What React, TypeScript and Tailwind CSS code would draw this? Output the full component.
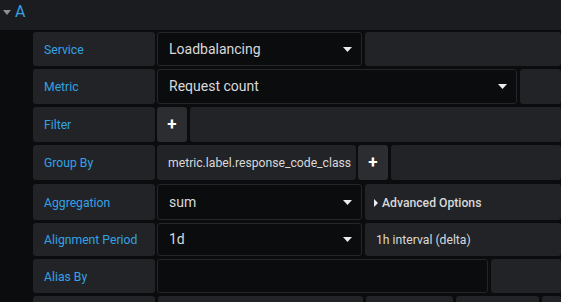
import React from 'react';

const Caret = () => (
    <svg width="9" height="5" viewBox="0 0 9 5" className="shrink-0">
        <path d="M0 0h9L4.5 5z" fill="#e9edf2" />
    </svg>
);

function Label({ children }: { children: React.ReactNode }) {
    return (
        <div className="w-[122px] shrink-0 h-full flex items-center pl-[11px] pt-[2px] bg-[#222326] rounded-[3px] text-[12.2px] text-[#33a2e5]">
            {children}
        </div>
    );
}

function Select({ value, width }: { value: string; width: string }) {
    return (
        <div
            className={`${width} shrink-0 h-full flex items-center justify-between pl-[11px] pr-[9px] bg-[#0b0c0e] border border-[#262628] rounded-[3px] text-[14px] text-[#d8d9da]`}
        >
            <span>{value}</span>
            <Caret />
        </div>
    );
}

function Filler({ children }: { children?: React.ReactNode }) {
    return (
        <div className="flex-1 h-full ml-[1px] flex items-center pl-[9px] pt-[2px] bg-[#222326] rounded-[3px] text-[12.2px] text-[#d8d9da]">
            {children}
        </div>
    );
}

function PlusButton() {
    return (
        <div className="w-[30px] shrink-0 h-full flex items-center justify-center bg-[#2c2d31] rounded-[3px] text-white text-[17px] font-bold">
            +
        </div>
    );
}

export default function App() {
    return (
        <div
            className="w-[561px] h-[302px] overflow-hidden bg-[#0b0c0e] flex flex-col"
            style={{ fontFamily: 'Roboto, "Liberation Sans", sans-serif' }}
        >
            {/* Query row header */}
            <div className="h-[30px] shrink-0 bg-[#1b1c1f]">
                <div className="h-[24px] flex items-center pl-[3px] gap-[4px]">
                    <svg width="8" height="5" viewBox="0 0 8 5">
                        <path d="M0 0h8L4 5z" fill="#8e8e8e" />
                    </svg>
                    <span className="text-[16px] text-[#33a2e5] leading-none">A</span>
                </div>
            </div>

            {/* Query editor rows */}
            <div className="pl-[33px] pt-[2px] flex flex-col gap-[3px]">
                <div className="h-[34px] flex gap-[2px]">
                    <Label>Service</Label>
                    <Select value="Loadbalancing" width="w-[205px]" />
                    <Filler />
                </div>
                <div className="h-[35px] flex gap-[2px]">
                    <Label>Metric</Label>
                    <Select value="Request count" width="w-[360px]" />
                    <Filler />
                </div>
                <div className="h-[35px] flex gap-[2px]">
                    <Label>Filter</Label>
                    <PlusButton />
                    <Filler />
                </div>
                <div className="h-[35px] flex gap-[2px]">
                    <Label>Group By</Label>
                    <div className="w-[199px] shrink-0 h-full flex items-center pl-[11px] pt-[2px] bg-[#222326] rounded-[3px] text-[12.2px] text-[#d8d9da] whitespace-nowrap">
                        metric.label.response_code_class
                    </div>
                    <PlusButton />
                    <Filler />
                </div>
                <div className="h-[36px] flex gap-[2px] mt-[1px]">
                    <Label>Aggregation</Label>
                    <Select value="sum" width="w-[205px]" />
                    <Filler>
                        <div className="flex items-center gap-[4px] font-medium">
                            <svg width="4" height="8" viewBox="0 0 4 8">
                                <path d="M0 0l4 4-4 4z" fill="#e9edf2" />
                            </svg>
                            Advanced Options
                        </div>
                    </Filler>
                </div>
                <div className="h-[33px] flex gap-[2px]">
                    <Label>Alignment Period</Label>
                    <Select value="1d" width="w-[205px]" />
                    <Filler>
                        <span className="pl-[2px]">1h interval (delta)</span>
                    </Filler>
                </div>
                <div className="h-[34px] flex gap-[2px]">
                    <Label>Alias By</Label>
                    <div className="w-[331px] shrink-0 h-full bg-[#0b0c0e] border border-[#262628] rounded-[3px]" />
                    <Filler />
                </div>
                <div className="h-[34px] flex gap-[3px]">
                    <div className="w-[122px] shrink-0 h-full bg-[#222326] rounded-[3px]" />
                    <div className="w-[205px] shrink-0 h-full bg-[#222326] rounded-[3px]" />
                    <div className="w-[87px] shrink-0 h-full bg-[#222326] rounded-[3px]" />
                    <div className="w-[83px] shrink-0 h-full bg-[#222326] rounded-[3px]" />
                    <div className="flex-1 h-full bg-[#222326] rounded-[3px]" />
                </div>
            </div>
        </div>
    );
}
